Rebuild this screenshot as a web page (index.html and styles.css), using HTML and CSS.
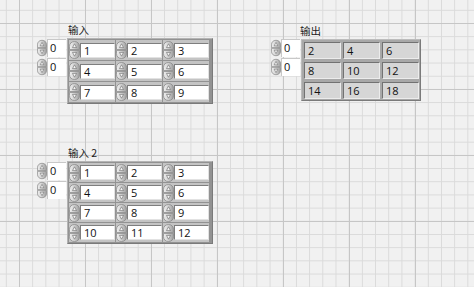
FILE: index.html
```html
<!DOCTYPE html>
<html lang="zh">
<head>
    <meta charset="UTF-8">
    <title>前面板</title>
    <link rel="stylesheet" href="styles.css">
</head>
<body>
    <!-- shared spinner glyph -->
    <svg class="defs" aria-hidden="true">
        <defs>
            <linearGradient id="spin-fill" x1="0" y1="0" x2="1" y2="0">
                <stop offset="0" stop-color="#efefef"/>
                <stop offset="0.45" stop-color="#d4d4d4"/>
                <stop offset="1" stop-color="#9c9c9c"/>
            </linearGradient>
            <symbol id="spin" viewBox="0 0 11 18">
                <path d="M0.5 8.6 V5.5 C0.5 2.5 2.5 0.5 5.5 0.5 C8.5 0.5 10.5 2.5 10.5 5.5 V8.6 Z" fill="url(#spin-fill)" stroke="#8a8a8a" stroke-width="0.8"/>
                <path d="M0.5 9.4 V12.5 C0.5 15.5 2.5 17.5 5.5 17.5 C8.5 17.5 10.5 15.5 10.5 12.5 V9.4 Z" fill="url(#spin-fill)" stroke="#8a8a8a" stroke-width="0.8"/>
                <path d="M5.5 2.8 L3.5 6.6 H7.5 Z" fill="#f6f6f6" stroke="#666" stroke-width="0.6"/>
                <path d="M5.5 15.2 L3.5 11.4 H7.5 Z" fill="#f6f6f6" stroke="#666" stroke-width="0.6"/>
            </symbol>
        </defs>
    </svg>

    <div class="ctl in1">
        <div class="label">输入</div>
        <div class="ctl-body">
            <div class="idx">
                <div class="idx-row"><svg class="spin-s"><use href="#spin"/></svg><div class="idx-box">0</div></div>
                <div class="idx-row"><svg class="spin-s"><use href="#spin"/></svg><div class="idx-box">0</div></div>
            </div>
            <div class="arr">
                <div class="el"><svg class="spin"><use href="#spin"/></svg><div class="num">1</div></div>
                <div class="el"><svg class="spin"><use href="#spin"/></svg><div class="num">2</div></div>
                <div class="el"><svg class="spin"><use href="#spin"/></svg><div class="num">3</div></div>
                <div class="el"><svg class="spin"><use href="#spin"/></svg><div class="num">4</div></div>
                <div class="el"><svg class="spin"><use href="#spin"/></svg><div class="num">5</div></div>
                <div class="el"><svg class="spin"><use href="#spin"/></svg><div class="num">6</div></div>
                <div class="el"><svg class="spin"><use href="#spin"/></svg><div class="num">7</div></div>
                <div class="el"><svg class="spin"><use href="#spin"/></svg><div class="num">8</div></div>
                <div class="el"><svg class="spin"><use href="#spin"/></svg><div class="num">9</div></div>
            </div>
        </div>
    </div>

    <div class="ctl out">
        <div class="label">输出</div>
        <div class="ctl-body">
            <div class="idx">
                <div class="idx-row"><svg class="spin-s"><use href="#spin"/></svg><div class="idx-box">0</div></div>
                <div class="idx-row"><svg class="spin-s"><use href="#spin"/></svg><div class="idx-box">0</div></div>
            </div>
            <div class="arr-out">
                <div class="ind">2</div>
                <div class="ind">4</div>
                <div class="ind">6</div>
                <div class="ind">8</div>
                <div class="ind">10</div>
                <div class="ind">12</div>
                <div class="ind">14</div>
                <div class="ind">16</div>
                <div class="ind">18</div>
            </div>
        </div>
    </div>

    <div class="ctl in2">
        <div class="label">输入 2</div>
        <div class="ctl-body">
            <div class="idx">
                <div class="idx-row"><svg class="spin-s"><use href="#spin"/></svg><div class="idx-box">0</div></div>
                <div class="idx-row"><svg class="spin-s"><use href="#spin"/></svg><div class="idx-box">0</div></div>
            </div>
            <div class="arr arr-tall">
                <div class="el"><svg class="spin"><use href="#spin"/></svg><div class="num">1</div></div>
                <div class="el"><svg class="spin"><use href="#spin"/></svg><div class="num">2</div></div>
                <div class="el"><svg class="spin"><use href="#spin"/></svg><div class="num">3</div></div>
                <div class="el"><svg class="spin"><use href="#spin"/></svg><div class="num">4</div></div>
                <div class="el"><svg class="spin"><use href="#spin"/></svg><div class="num">5</div></div>
                <div class="el"><svg class="spin"><use href="#spin"/></svg><div class="num">6</div></div>
                <div class="el"><svg class="spin"><use href="#spin"/></svg><div class="num">7</div></div>
                <div class="el"><svg class="spin"><use href="#spin"/></svg><div class="num">8</div></div>
                <div class="el"><svg class="spin"><use href="#spin"/></svg><div class="num">9</div></div>
                <div class="el"><svg class="spin"><use href="#spin"/></svg><div class="num">10</div></div>
                <div class="el"><svg class="spin"><use href="#spin"/></svg><div class="num">11</div></div>
                <div class="el"><svg class="spin"><use href="#spin"/></svg><div class="num">12</div></div>
            </div>
        </div>
    </div>
</body>
</html>
```

FILE: styles.css
```css
html, body {
    margin: 0;
    height: 100%;
}

body {
    position: relative;
    overflow: hidden;
    font-family: 'Open Sans', 'Noto Sans', 'Noto Sans CJK SC', sans-serif;
    font-size: 11px;
    color: #111;
    background-color: #f1f1f1;
    background-image:
        linear-gradient(to right, #c6c6c6 1px, transparent 1px),
        linear-gradient(to bottom, #c6c6c6 1px, transparent 1px),
        linear-gradient(to right, #dadada 1px, transparent 1px),
        linear-gradient(to bottom, #dadada 1px, transparent 1px);
    background-size: 66px 66px, 66px 66px, 13.2px 13.2px, 13.2px 13.2px;
    background-position: 19px 23px;
}

.defs {
    position: absolute;
    width: 0;
    height: 0;
}

/* front panel objects sit on a free canvas */
.ctl {
    position: absolute;
}

.in1 { left: 37px; top: 22px; }
.out { left: 271px; top: 23px; }
.in2 { left: 37px; top: 145px; }

.label {
    font-family: 'Noto Sans CJK SC', sans-serif;
    font-size: 10.5px;
    line-height: 16px;
    height: 16px;
    color: #1a1a1a;
    margin-left: 31px;
}

.out .label {
    margin-left: 29px;
}

.ctl-body {
    display: flex;
    align-items: flex-start;
    gap: 1px;
}

.idx {
    display: flex;
    flex-direction: column;
    gap: 1px;
    margin-top: 1px;
}

.out .idx {
    margin-top: 0;
}

.idx-row {
    display: flex;
    height: 18px;
}

.spin-s {
    width: 10px;
    height: 18px;
}

.idx-box {
    width: 19px;
    height: 18px;
    box-sizing: border-box;
    background: #fff;
    border-top: 1px solid #c8c8c8;
    border-left: 1px solid #c8c8c8;
    padding-left: 2px;
    line-height: 16px;
}

.arr {
    display: grid;
    grid-template-columns: repeat(3, 46px);
    grid-auto-rows: 20px;
    gap: 1px;
    padding: 1px 3px 1px 1px;
    background: #929292;
    border: 1px solid #7a7a7a;
    border-top-color: #b4b4b4;
    border-left-color: #b4b4b4;
}

.arr-tall {
    grid-auto-rows: 19px;
}

.el {
    display: flex;
    align-items: center;
    background: #c4c4c4;
}

.spin {
    width: 11px;
    height: 18px;
    flex: none;
}

.num {
    width: 35px;
    height: 15px;
    box-sizing: border-box;
    background: #fff;
    border: 1px solid #e2e2e2;
    border-top-color: #7e7e7e;
    border-left-color: #7e7e7e;
    padding-left: 3px;
    line-height: 13px;
}

.arr-out {
    display: grid;
    grid-template-columns: repeat(3, 37px);
    grid-auto-rows: 17px;
    column-gap: 2px;
    row-gap: 3px;
    padding: 2px 1px 1px 2px;
    background: #a8a8a8;
    border: 1px solid #7a7a7a;
    border-top-color: #bcbcbc;
    border-left-color: #bcbcbc;
}

.ind {
    box-sizing: border-box;
    background: #d6d6d6;
    border: 1px solid #ececec;
    border-top-color: #727272;
    border-left-color: #727272;
    padding-left: 3px;
    line-height: 15px;
}
```
